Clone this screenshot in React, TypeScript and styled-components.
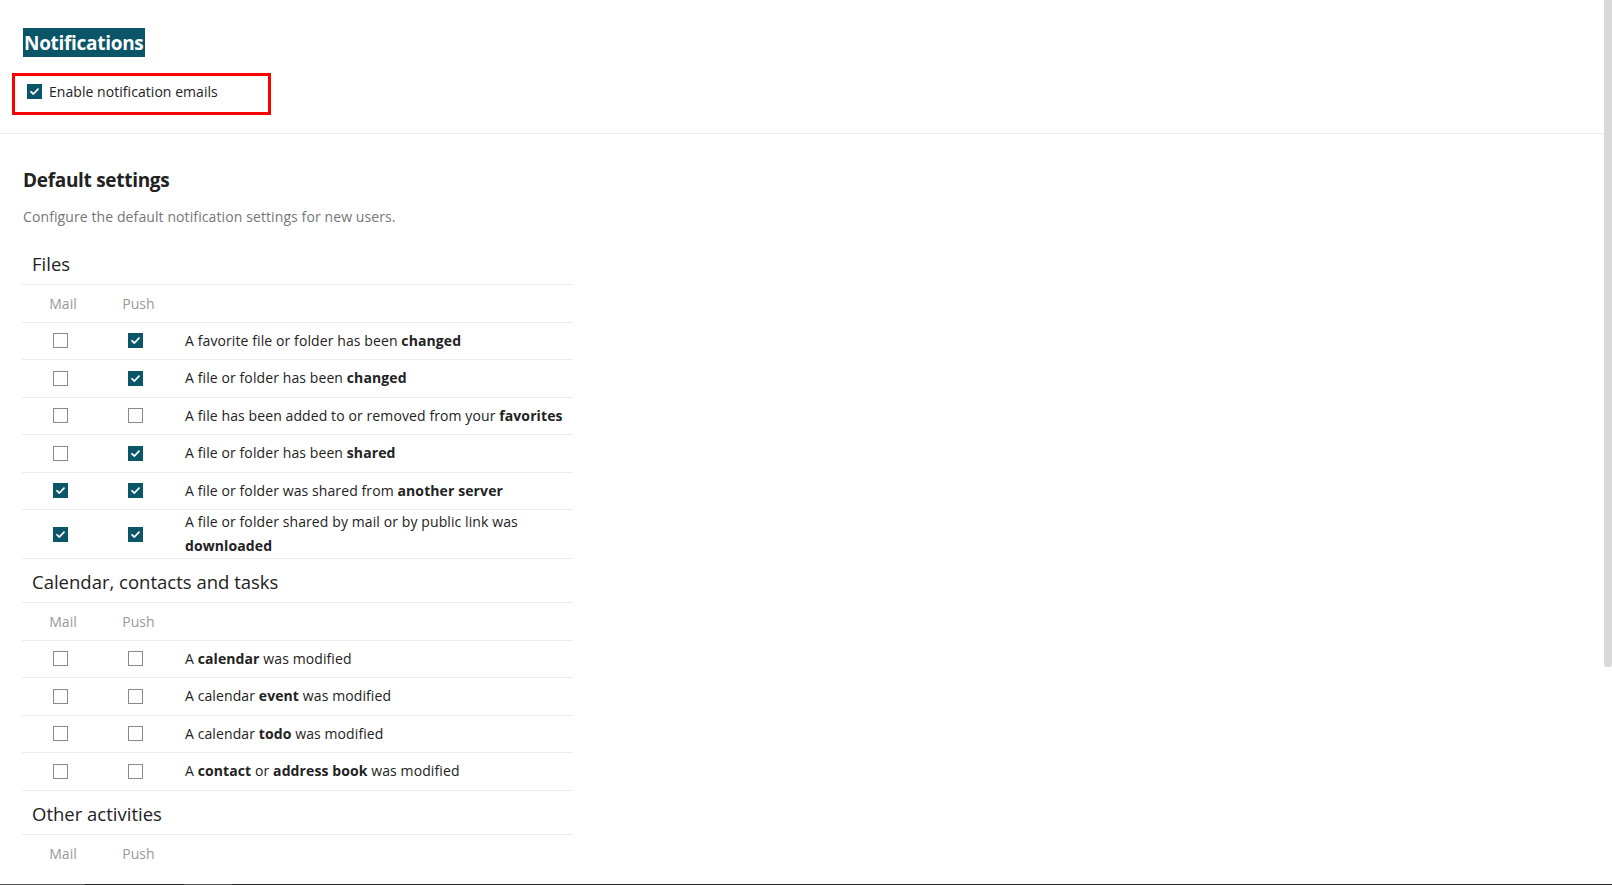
import React from "react";
import styled, { createGlobalStyle } from "styled-components";

const GlobalStyle = createGlobalStyle`
  html, body {
    margin: 0;
    padding: 0;
    height: 100%;
    background: #ffffff;
  }
  body {
    font-family: "Open Sans", "Noto Sans", "Liberation Sans", sans-serif;
    color: #222222;
    font-size: 14px;
  }
  * { box-sizing: border-box; }
`;

const PRIMARY = "#0b5569";

const Page = styled.div`
  height: 100vh;
  display: flex;
  flex-direction: column;
`;

const Viewport = styled.div`
  flex: 1;
  min-height: 0;
  display: flex;
`;

const Scroller = styled.div`
  flex: 1;
  min-width: 0;
  overflow: hidden;
`;

const ScrollTrack = styled.div`
  width: 8px;
  flex: none;
  background: #ffffff;
`;

const ScrollThumb = styled.div`
  height: 667px;
  background: #d9d9d9;
  border-radius: 0 0 3px 3px;
`;

const BottomStrip = styled.div`
  height: 1px;
  flex: none;
  display: flex;
  background: #222222;
`;

const StripSegment = styled.div<{ $w: number; $light?: boolean }>`
  width: ${(p) => p.$w}px;
  background: ${(p) => (p.$light ? "#555555" : "#222222")};
`;

const TopSection = styled.section`
  padding: 28px 23px 18px;
  border-bottom: 1px solid #ececec;
`;

const SelectedTitle = styled.h2`
  display: inline-block;
  margin: 0;
  padding: 1px 1px 0;
  background: ${PRIMARY};
  color: #ffffff;
  font-size: 19px;
  letter-spacing: -0.3px;
  font-weight: 700;
  line-height: 28px;
`;

const HighlightBox = styled.div`
  margin: 16px 0 0 -11px;
  width: 259px;
  height: 42px;
  border: 3px solid #ff0000;
  display: flex;
  align-items: flex-start;
  padding: 8px 0 0 12px;
  gap: 7px;
`;

const Label = styled.span`
  font-size: 14px;
  line-height: 15px;
  letter-spacing: 0.05px;
  color: #222222;
`;

const SettingsSection = styled.section`
  padding: 32px 23px 40px 22px;
`;

const SectionTitle = styled.h3`
  margin: 0 0 0 1px;
  font-size: 19px;
  letter-spacing: -0.3px;
  font-weight: 700;
  line-height: 28px;
  color: #222222;
`;

const Description = styled.p`
  margin: 13px 0 14px 1px;
  font-size: 14px;
  line-height: 20px;
  letter-spacing: 0.1px;
  color: #767676;
`;

const Table = styled.div`
  width: 551px;
`;

const CategoryTitle = styled.div`
  height: 44px;
  display: flex;
  align-items: center;
  padding: 2px 0 0 10px;
  font-size: 18.5px;
  font-weight: 400;
  color: #222222;
  border-bottom: 1px solid #ececec;
`;

const Row = styled.div<{ $tall?: boolean; $last?: boolean }>`
  display: grid;
  grid-template-columns: 76px 75px 1fr;
  align-items: center;
  min-height: ${(p) => (p.$tall ? "49px" : "37.5px")};
  border-bottom: ${(p) => (p.$last ? "none" : "1px solid #ececec")};
`;

const HeadCell = styled.div`
  text-align: center;
  padding-left: 6px;
  font-size: 14px;
  color: #999999;
`;

const BoxCell = styled.div`
  display: flex;
  justify-content: center;
  align-items: center;
`;

const TextCell = styled.div`
  padding-left: 12px;
  font-size: 14px;
  line-height: 24px;
  letter-spacing: 0.1px;
  color: #222222;
  b {
    font-weight: 700;
  }
`;

const Box = styled.span<{ $checked?: boolean }>`
  width: 15px;
  height: 15px;
  flex: none;
  display: inline-flex;
  align-items: center;
  justify-content: center;
  background: ${(p) => (p.$checked ? PRIMARY : "#ffffff")};
  border: 1px solid ${(p) => (p.$checked ? PRIMARY : "#8a8a8a")};
`;

function Check({ checked }: { checked?: boolean }) {
  return (
    <Box $checked={checked}>
      {checked && (
        <svg width="11" height="11" viewBox="0 0 11 11">
          <polyline
            points="2,5.8 4.4,8 9,3.2"
            fill="none"
            stroke="#ffffff"
            strokeWidth="1.8"
            strokeLinecap="round"
            strokeLinejoin="round"
          />
        </svg>
      )}
    </Box>
  );
}

type Item = { mail: boolean; push: boolean; text: React.ReactNode; tall?: boolean };

const groups: { title: string; items: Item[] }[] = [
  {
    title: "Files",
    items: [
      { mail: false, push: true, text: <>A favorite file or folder has been <b>changed</b></> },
      { mail: false, push: true, text: <>A file or folder has been <b>changed</b></> },
      { mail: false, push: false, text: <>A file has been added to or removed from your <b>favorites</b></> },
      { mail: false, push: true, text: <>A file or folder has been <b>shared</b></> },
      { mail: true, push: true, text: <>A file or folder was shared from <b>another server</b></> },
      {
        mail: true,
        push: true,
        tall: true,
        text: <>A file or folder shared by mail or by public link was <b>downloaded</b></>,
      },
    ],
  },
  {
    title: "Calendar, contacts and tasks",
    items: [
      { mail: false, push: false, text: <>A <b>calendar</b> was modified</> },
      { mail: false, push: false, text: <>A calendar <b>event</b> was modified</> },
      { mail: false, push: false, text: <>A calendar <b>todo</b> was modified</> },
      { mail: false, push: false, text: <>A <b>contact</b> or <b>address book</b> was modified</> },
    ],
  },
  {
    title: "Other activities",
    items: [],
  },
];

export default function App() {
  return (
    <>
      <GlobalStyle />
      <Page>
        <Viewport>
          <Scroller>
            <TopSection>
              <SelectedTitle>Notifications</SelectedTitle>
              <HighlightBox>
                <Check checked />
                <Label>Enable notification emails</Label>
              </HighlightBox>
            </TopSection>
            <SettingsSection>
              <SectionTitle>Default settings</SectionTitle>
              <Description>Configure the default notification settings for new users.</Description>
              <Table>
                {groups.map((g) => (
                  <React.Fragment key={g.title}>
                    <CategoryTitle>{g.title}</CategoryTitle>
                    <Row $last={g.items.length === 0}>
                      <HeadCell>Mail</HeadCell>
                      <HeadCell>Push</HeadCell>
                      <div />
                    </Row>
                    {g.items.map((it, i) => (
                      <Row key={i} $tall={it.tall}>
                        <BoxCell>
                          <Check checked={it.mail} />
                        </BoxCell>
                        <BoxCell>
                          <Check checked={it.push} />
                        </BoxCell>
                        <TextCell>{it.text}</TextCell>
                      </Row>
                    ))}
                  </React.Fragment>
                ))}
              </Table>
            </SettingsSection>
          </Scroller>
          <ScrollTrack>
            <ScrollThumb />
          </ScrollTrack>
        </Viewport>
        <BottomStrip>
          <StripSegment $w={85} $light />
          <StripSegment $w={99} />
          <StripSegment $w={48} $light />
        </BottomStrip>
      </Page>
    </>
  );
}
